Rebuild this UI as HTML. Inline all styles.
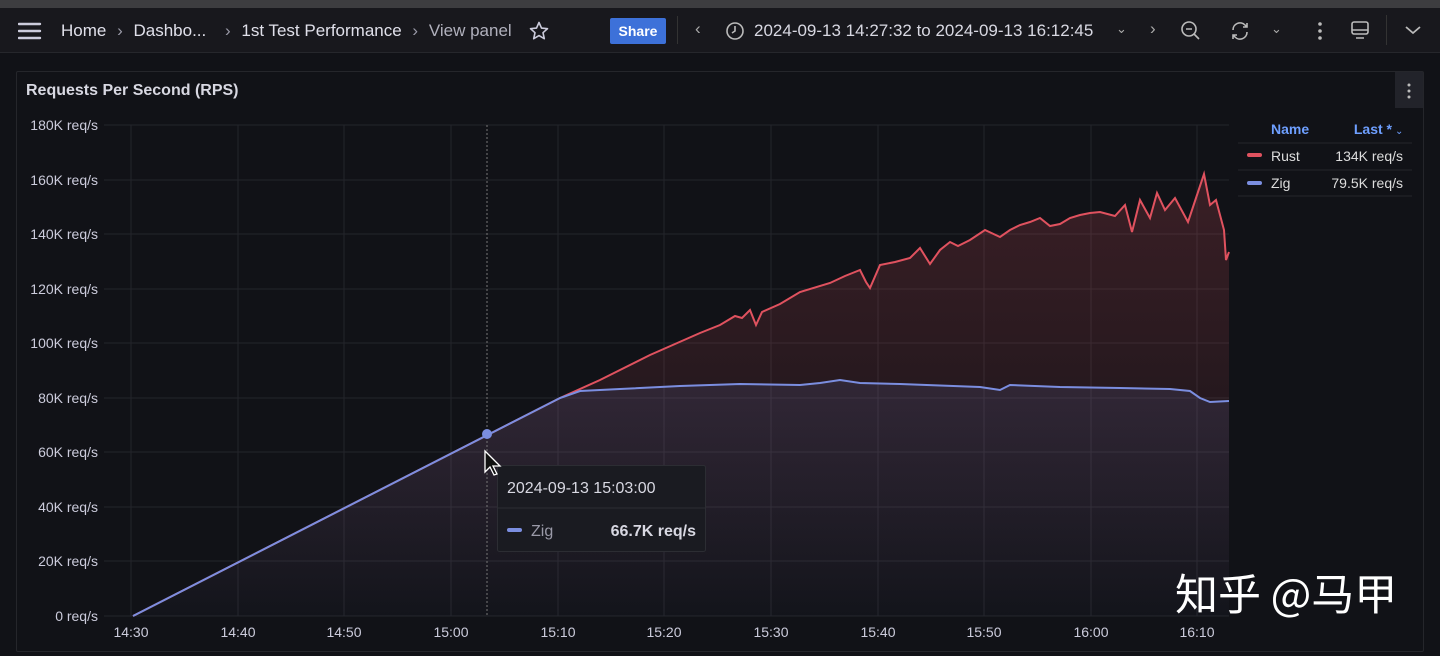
<!DOCTYPE html>
<html><head><meta charset="utf-8"><style>
body{margin:0;width:1440px;height:656px;background:#111217;overflow:hidden;font-family:"Liberation Sans","Noto Sans CJK SC",sans-serif;color:#ccccdc;position:relative}
.top{position:absolute;left:0;top:0;width:1440px;height:8px;background:#3d3d40}
.hdr{position:absolute;left:0;top:8px;width:1440px;height:44px;background:#18181d;border-bottom:1px solid #26272c}
.t{position:absolute;white-space:nowrap}
.panel{position:absolute;left:16px;top:71px;width:1406px;height:579px;border:1px solid #25262b;background:#111217;border-radius:2px}
</style></head><body>
<div class="top"></div>
<div class="hdr">
<svg class="t" style="left:18px;top:14px" width="24" height="18"><g stroke="#ccccdc" stroke-width="2.4" stroke-linecap="round"><line x1="1" y1="2" x2="22" y2="2"/><line x1="1" y1="9" x2="22" y2="9"/><line x1="1" y1="16" x2="22" y2="16"/></g></svg>
<div class="t" style="left:61px;top:13px;font-size:17px;color:#e0e0ea">Home <span style="color:#9a9aa8;margin:0 6px">›</span> Dashbo... <span style="color:#9a9aa8;margin:0 6px 0 14px">›</span> 1st Test Performance <span style="color:#9a9aa8;margin:0 6px">›</span> <span style="color:#b0b0bc">View panel</span></div>
<svg class="t" style="left:529px;top:13px" width="20" height="19"><path d="M10 1.5l2.5 5.6 6 .6-4.5 4 1.3 6-5.3-3.1-5.3 3.1 1.3-6-4.5-4 6-.6z" fill="none" stroke="#ccccdc" stroke-width="1.6" stroke-linejoin="round"/></svg>
<div class="t" style="left:610px;top:10px;width:56px;height:26px;background:#3d71d9;border-radius:2px;color:#fff;font-size:14px;font-weight:bold;text-align:center;line-height:26px">Share</div>
<div class="t" style="left:677px;top:8px;width:1px;height:28px;background:#333"></div>
<div class="t" style="left:695px;top:11px;font-size:17px;color:#aaa">‹</div>
<svg class="t" style="left:725px;top:13px" width="20" height="20"><circle cx="10" cy="10" r="8" fill="none" stroke="#bbb" stroke-width="1.6"/><path d="M10 5v5l-3 2" stroke="#bbb" stroke-width="1.6" fill="none"/></svg>
<div class="t" style="left:754px;top:13px;font-size:17px;color:#d8d8e2">2024-09-13 14:27:32 to 2024-09-13 16:12:45</div>
<div class="t" style="left:1116px;top:13px;font-size:13px;color:#aaa">⌄</div>
<div class="t" style="left:1150px;top:11px;font-size:17px;color:#aaa">›</div>
<svg class="t" style="left:1180px;top:12px" width="22" height="22"><circle cx="9" cy="9" r="7" fill="none" stroke="#bbb" stroke-width="1.6"/><path d="M6 9h6M14 14l5 5" stroke="#bbb" stroke-width="1.6"/></svg>
<svg class="t" style="left:1229px;top:12px" width="22" height="22"><path d="M4 10a7 7 0 0 1 12-5l2 2M18 12a7 7 0 0 1-12 5l-2-2M18 3v4h-4M4 19v-4h4" stroke="#bbb" stroke-width="1.6" fill="none"/></svg>
<div class="t" style="left:1271px;top:13px;font-size:13px;color:#aaa">⌄</div>
<svg class="t" style="left:1316px;top:13px" width="8" height="20"><g fill="#bbb"><circle cx="4" cy="3" r="1.8"/><circle cx="4" cy="10" r="1.8"/><circle cx="4" cy="17" r="1.8"/></g></svg>
<svg class="t" style="left:1350px;top:12px" width="20" height="22"><rect x="2" y="2" width="16" height="12" rx="2" fill="none" stroke="#bbb" stroke-width="1.6"/><path d="M2 10h16M6 18h8" stroke="#bbb" stroke-width="1.6"/></svg>
<div class="t" style="left:1386px;top:7px;width:1px;height:30px;background:#333"></div>
<svg class="t" style="left:1404px;top:16px" width="18" height="12"><path d="M2 3l7 6 7-6" stroke="#bbb" stroke-width="1.8" fill="none"/></svg>
</div>
<div class="panel">
<div class="t" style="left:9px;top:10px;font-size:16px;font-weight:bold;color:#d8d8e2">Requests Per Second (RPS)</div>
<div class="t" style="left:1378px;top:0;width:28px;height:36px;background:#22232a"><svg style="position:absolute;left:11px;top:11px" width="6" height="16"><g fill="#bbb"><circle cx="3" cy="2" r="1.5"/><circle cx="3" cy="8" r="1.5"/><circle cx="3" cy="14" r="1.5"/></g></svg></div>
</div>
<svg class="t" style="left:0;top:0" width="1440" height="656" font-family="Liberation Sans" font-size="14">
<defs>
<linearGradient id="gr" x1="0" y1="0" x2="0" y2="1"><stop offset="0" stop-color="#e0525f" stop-opacity=".2"/><stop offset="1" stop-color="#e0525f" stop-opacity="0"/></linearGradient>
<linearGradient id="gb" x1="0" y1="0" x2="0" y2="1"><stop offset="0" stop-color="#7b8ee0" stop-opacity=".12"/><stop offset="1" stop-color="#7b8ee0" stop-opacity="0.02"/></linearGradient>
</defs>
<g stroke="#24252b" stroke-width="1">
<line x1="104" y1="125" x2="1229" y2="125"/><line x1="104" y1="180" x2="1229" y2="180"/><line x1="104" y1="234" x2="1229" y2="234"/><line x1="104" y1="289" x2="1229" y2="289"/><line x1="104" y1="343" x2="1229" y2="343"/><line x1="104" y1="398" x2="1229" y2="398"/><line x1="104" y1="452" x2="1229" y2="452"/><line x1="104" y1="507" x2="1229" y2="507"/><line x1="104" y1="561" x2="1229" y2="561"/><line x1="104" y1="616" x2="1229" y2="616"/>
<line x1="131" y1="125" x2="131" y2="616"/><line x1="238" y1="125" x2="238" y2="616"/><line x1="344" y1="125" x2="344" y2="616"/><line x1="451" y1="125" x2="451" y2="616"/><line x1="558" y1="125" x2="558" y2="616"/><line x1="664" y1="125" x2="664" y2="616"/><line x1="771" y1="125" x2="771" y2="616"/><line x1="878" y1="125" x2="878" y2="616"/><line x1="984" y1="125" x2="984" y2="616"/><line x1="1091" y1="125" x2="1091" y2="616"/><line x1="1197" y1="125" x2="1197" y2="616"/>
</g>
<path id="rp" d="M133 616L560 398L600 380L650 355L700 333L720 325L735 316L742 318L750 310L756 325L762 312L780 304L800 292L830 283L845 276L860 270L866 282L870 288L880 265L895 262L910 258L920 248L930 264L940 250L950 242L958 246L970 240L985 230L1000 237L1010 230L1020 225L1030 222L1040 218L1050 226L1060 224L1070 218L1080 215L1090 213L1100 212L1115 216L1125 205L1132 232L1140 200L1150 218L1157 193L1165 210L1175 198L1188 222L1196 198L1204 174L1210 205L1216 200L1220 215L1224 230L1226 260L1229 252" fill="none" stroke="#e0525f" stroke-width="2"/>
<path d="M133 616L560 398L600 380L650 355L700 333L720 325L735 316L742 318L750 310L756 325L762 312L780 304L800 292L830 283L845 276L860 270L866 282L870 288L880 265L895 262L910 258L920 248L930 264L940 250L950 242L958 246L970 240L985 230L1000 237L1010 230L1020 225L1030 222L1040 218L1050 226L1060 224L1070 218L1080 215L1090 213L1100 212L1115 216L1125 205L1132 232L1140 200L1150 218L1157 193L1165 210L1175 198L1188 222L1196 198L1204 174L1210 205L1216 200L1220 215L1224 230L1226 260L1229 252L1229 616Z" fill="url(#gr)"/>
<path d="M133 616L560 398L580 391L620 389L680 386L740 384L800 385L820 383L840 380L860 383L900 384L980 387L1000 390L1010 385L1060 387L1120 388L1170 389L1190 391L1200 398L1210 402L1229 401L1229 616Z" fill="url(#gb)"/>
<path d="M133 616L560 398L580 391L620 389L680 386L740 384L800 385L820 383L840 380L860 383L900 384L980 387L1000 390L1010 385L1060 387L1120 388L1170 389L1190 391L1200 398L1210 402L1229 401" fill="none" stroke="#7b8ee0" stroke-width="2"/>
<line x1="487" y1="125" x2="487" y2="616" stroke="#777" stroke-dasharray="2 2"/>
<circle cx="487" cy="434" r="5" fill="#7b8ee0"/>
<g fill="#ccccdc" text-anchor="end">
<text x="98" y="130">180K req/s</text><text x="98" y="185">160K req/s</text><text x="98" y="239">140K req/s</text><text x="98" y="294">120K req/s</text><text x="98" y="348">100K req/s</text><text x="98" y="403">80K req/s</text><text x="98" y="457">60K req/s</text><text x="98" y="512">40K req/s</text><text x="98" y="566">20K req/s</text><text x="98" y="621">0 req/s</text>
</g>
<g fill="#ccccdc" text-anchor="middle">
<text x="131" y="637">14:30</text><text x="238" y="637">14:40</text><text x="344" y="637">14:50</text><text x="451" y="637">15:00</text><text x="558" y="637">15:10</text><text x="664" y="637">15:20</text><text x="771" y="637">15:30</text><text x="878" y="637">15:40</text><text x="984" y="637">15:50</text><text x="1091" y="637">16:00</text><text x="1197" y="637">16:10</text>
</g>
<g>
<text x="1271" y="134" fill="#6e9fff" font-weight="bold">Name</text>
<text x="1392" y="134" fill="#6e9fff" font-weight="bold" text-anchor="end">Last *</text><text x="1395" y="134" fill="#6e9fff" font-size="10">⌄</text>
<line x1="1238" y1="143" x2="1412" y2="143" stroke="#25262b"/>
<rect x="1247" y="153" width="15" height="4" rx="2" fill="#e0525f"/><text x="1271" y="161" fill="#ddd">Rust</text><text x="1403" y="161" fill="#ddd" text-anchor="end">134K req/s</text>
<line x1="1238" y1="170" x2="1412" y2="170" stroke="#25262b"/>
<rect x="1247" y="181" width="15" height="4" rx="2" fill="#7b8ee0"/><text x="1271" y="188" fill="#ddd">Zig</text><text x="1403" y="188" fill="#ddd" text-anchor="end">79.5K req/s</text>
<line x1="1238" y1="196" x2="1412" y2="196" stroke="#25262b"/>
</g>
<rect x="497.5" y="465.5" width="208" height="86" rx="2" fill="#1a1b21" stroke="#2c2d33"/>
<line x1="498" y1="508" x2="705" y2="508" stroke="#2c2d33"/>
<text x="507" y="493" fill="#d8d8e2" font-size="16">2024-09-13 15:03:00</text>
<rect x="507" y="528" width="15" height="4" rx="2" fill="#7b8ee0"/>
<text x="531" y="536" fill="#9a9aa8" font-size="16">Zig</text>
<text x="696" y="536" fill="#d8d8e2" font-size="16" font-weight="bold" text-anchor="end">66.7K req/s</text>
<path d="M485 451v21l5-5 4 8 3-1-4-8 7 0z" fill="#111" stroke="#fff" stroke-width="1.3"/>
<text x="1175" y="610" fill="#fff" font-size="43" font-family="Noto Sans CJK SC">知乎 @马甲</text>
</svg>
</body></html>
